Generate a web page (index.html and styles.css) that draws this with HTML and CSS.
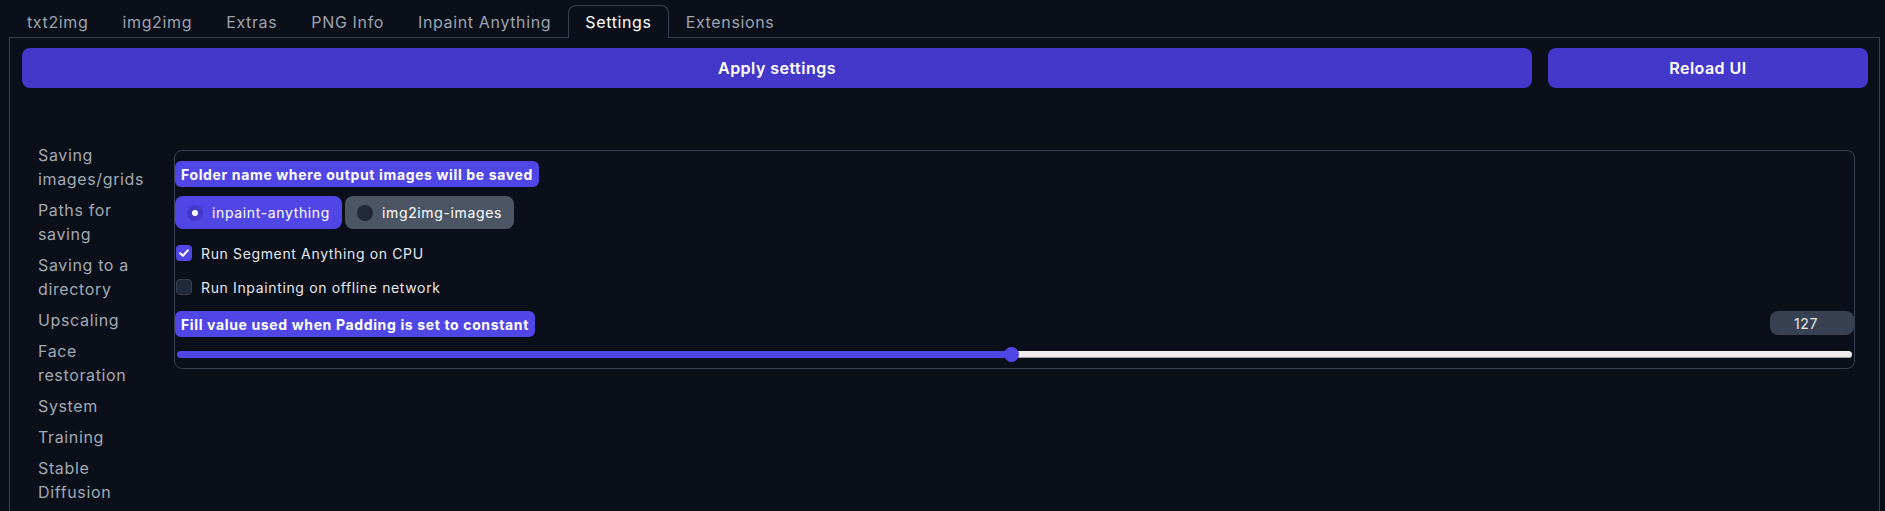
FILE: index.html
```html
<!DOCTYPE html>
<html>
<head>
<meta charset="utf-8">
<link rel="stylesheet" href="styles.css">
</head>
<body>
<div class="app">
  <div class="tabs">
    <div class="tab">txt2img</div>
    <div class="tab">img2img</div>
    <div class="tab">Extras</div>
    <div class="tab">PNG Info</div>
    <div class="tab">Inpaint Anything</div>
    <div class="tab selected">Settings</div>
    <div class="tab">Extensions</div>
  </div>
  <div class="panel">
    <div class="actions">
      <button class="btn btn-apply">Apply settings</button>
      <button class="btn btn-reload">Reload UI</button>
    </div>
    <div class="settings">
      <div class="sidebar">
        <div class="side-item">Saving images/grids</div>
        <div class="side-item">Paths for saving</div>
        <div class="side-item">Saving to a directory</div>
        <div class="side-item">Upscaling</div>
        <div class="side-item">Face restoration</div>
        <div class="side-item">System</div>
        <div class="side-item">Training</div>
        <div class="side-item">Stable Diffusion</div>
      </div>
      <div class="box">
        <div class="label">Folder name where output images will be saved</div>
        <div class="radios">
          <label class="pill pill-on"><span class="dot dot-on"></span>inpaint-anything</label>
          <label class="pill pill-off"><span class="dot dot-off"></span>img2img-images</label>
        </div>
        <div class="check-row first">
          <span class="cb cb-on">
            <svg width="16" height="16" viewBox="0 0 16 16"><path d="M4.2 8.3 L6.9 10.8 L11.8 5.4" fill="none" stroke="#fff" stroke-width="2.1" stroke-linecap="round" stroke-linejoin="round"/></svg>
          </span>
          <span class="cb-text">Run Segment Anything on CPU</span>
        </div>
        <div class="check-row">
          <span class="cb cb-off"></span>
          <span class="cb-text">Run Inpainting on offline network</span>
        </div>
        <div class="slider-head">
          <div class="label">Fill value used when Padding is set to constant</div>
          <div class="num">127</div>
        </div>
        <div class="slider">
          <div class="fill" style="width: 49.8%"></div>
          <div class="rest"></div>
          <div class="thumb" style="left: 49.8%"></div>
        </div>
      </div>
    </div>
  </div>
</div>
</body>
</html>
```

FILE: styles.css
```css
* { box-sizing: border-box; }
html, body {
  margin: 0;
  background: #0b0f19;
  height: 511px;
  overflow: hidden;
}
body {
  font-family: Inter, "Noto Sans", sans-serif;
  color: #e5e7eb;
  letter-spacing: 0.04em;
}
.app {
  padding: 0 5px 0 9px;
}
.tabs {
  display: flex;
  padding-top: 5px;
  padding-left: 1px;
  border-bottom: 1px solid #374151;
}
.tab {
  height: 32px;
  padding: 0 16px;
  display: flex;
  align-items: center;
  font-size: 16px;
  color: #9ca3af;
  border: 1px solid transparent;
  border-bottom: none;
  border-radius: 8px 8px 0 0;
}
.tab.selected {
  color: #ffffff;
  border-color: #374151;
  background: #0b0f19;
  margin-bottom: -1px;
  height: 33px;
}
.panel {
  border-left: 1px solid #374151;
  border-right: 1px solid #374151;
  padding: 10px 11px 40px 12px;
}
.actions {
  display: flex;
  gap: 16px;
}
.btn {
  height: 40px;
  border: none;
  border-radius: 8px;
  background: #4338ca;
  color: #ffffff;
  font-family: inherit;
  letter-spacing: 0.03em;
  font-size: 16px;
  font-weight: 600;
}
.btn-apply { flex: 1; }
.btn-reload { width: 320px; }
.settings {
  display: flex;
  align-items: flex-start;
  margin-top: 55px;
}
.sidebar {
  width: 152px;
  padding-left: 16px;
  padding-right: 26px;
  flex: none;
}
.side-item {
  font-size: 16px;
  line-height: 24px;
  color: #a3a9b3;
  margin-bottom: 7px;
}
.box {
  flex: 1;
  margin-top: 7px;
  margin-right: 13px;
  border: 1px solid #374151;
  border-radius: 8px;
  padding: 10px 0 10px 0;
  display: flex;
  flex-direction: column;
  align-items: flex-start;
}
.label {
  height: 26px;
  padding: 0 6px;
  display: flex;
  align-items: center;
  background: #4f46e5;
  color: #ffffff;
  font-size: 14px;
  font-weight: 700;
  border-radius: 6px;
}
.radios {
  display: flex;
  gap: 3px;
  margin-top: 9px;
}
.pill {
  height: 33px;
  display: flex;
  align-items: center;
  gap: 9px;
  padding: 0 12px;
  border-radius: 8px;
  font-size: 14px;
  color: #ffffff;
}
.pill-on { background: #4f46e5; }
.pill-off { background: #4b5563; }
.dot {
  width: 16px;
  height: 16px;
  border-radius: 50%;
  display: flex;
  align-items: center;
  justify-content: center;
}
.dot-on { background: #4338ca; }
.dot-on::after {
  content: "";
  width: 6px;
  height: 6px;
  border-radius: 50%;
  background: #ffffff;
}
.dot-off { background: #1f2937; }
.check-row {
  display: flex;
  align-items: center;
  gap: 9px;
  height: 20px;
  margin-top: 14px;
  padding-left: 1px;
}
.cb {
  width: 16px;
  height: 16px;
  border-radius: 4px;
  display: flex;
}
.cb-on { background: #4f46e5; }
.cb-off { background: #1f2937; border: 1px solid #374151; }
.cb-text {
  font-size: 14px;
  color: #e5e7eb;
}
.slider-head {
  display: flex;
  justify-content: space-between;
  align-items: flex-start;
  align-self: stretch;
  margin-top: 14px;
}
.num {
  width: 84px;
  height: 24px;
  background: #374151;
  border-radius: 8px;
  padding-left: 24px;
  display: flex;
  align-items: center;
  font-size: 14px;
  color: #e5e7eb;
}
.slider {
  position: relative;
  align-self: stretch;
  display: flex;
  height: 7px;
  margin: 14px 2px 0 2px;
}
.fill {
  height: 7px;
  background: #4f46e5;
  border-radius: 4px 0 0 4px;
}
.rest {
  flex: 1;
  height: 7px;
  background: #eeeeee;
  border-radius: 0 4px 4px 0;
  box-shadow: inset 0 -1px 0 #a0a0a0;
}
.thumb {
  position: absolute;
  top: -4px;
  width: 15px;
  height: 15px;
  margin-left: -7px;
  border-radius: 50%;
  background: #4f46e5;
}
```
